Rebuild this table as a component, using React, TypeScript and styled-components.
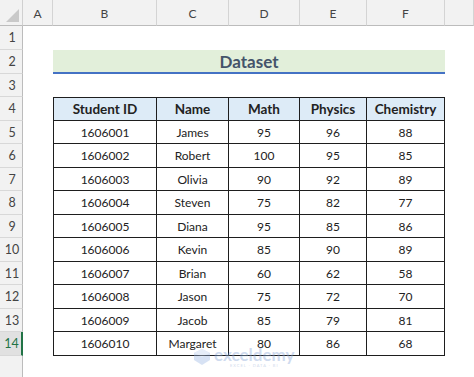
import { Fragment } from "react";
import styled, { createGlobalStyle } from "styled-components";

const GlobalStyle = createGlobalStyle`
  html, body {
    margin: 0;
    padding: 0;
    background: #ffffff;
    overflow: hidden;
  }
  body {
    font-family: "Lato", "Open Sans", sans-serif;
  }
`;

const COLS = ["A", "B", "C", "D", "E", "F", ""];
const ROW_HEIGHTS = [24, 24, 23, 24, 23, 24, 23, 24, 23, 24, 23, 24, 23, 24];

const students = [
  ["1606001", "James", 95, 96, 88],
  ["1606002", "Robert", 100, 95, 85],
  ["1606003", "Olivia", 90, 92, 89],
  ["1606004", "Steven", 75, 82, 77],
  ["1606005", "Diana", 95, 85, 86],
  ["1606006", "Kevin", 85, 90, 89],
  ["1606007", "Brian", 60, 62, 58],
  ["1606008", "Jason", 75, 72, 70],
  ["1606009", "Jacob", 85, 79, 81],
  ["1606010", "Margaret", 80, 86, 68],
];

const heads = ["Student ID", "Name", "Math", "Physics", "Chemistry"];

const Sheet = styled.div`
  position: relative;
  width: 474px;
  height: 377px;
  overflow: hidden;
  display: grid;
  grid-template-columns: 23px 30px 104px 72px 71px 67px 78px 1fr;
  grid-template-rows: 26px ${ROW_HEIGHTS.map((h) => `${h}px`).join(" ")} 1fr;
  color: #222;
`;

const Corner = styled.div`
  background: #f2f2f2;
  border-right: 1px solid #d0d0d0;
  border-bottom: 1px solid #bcbcbc;
  position: relative;
  &::after {
    content: "";
    position: absolute;
    right: 3px;
    bottom: 3px;
    width: 0;
    height: 0;
    border-left: 13px solid transparent;
    border-bottom: 13px solid #c9c9c9;
  }
`;

const ColHead = styled.div`
  background: #f2f2f2;
  border-right: 1px solid #d4d4d4;
  border-bottom: 1px solid #bcbcbc;
  display: flex;
  align-items: center;
  justify-content: center;
  font-size: 12px;
  color: #444;
  padding-top: 2px;
`;

const RowHead = styled.div<{ $active?: boolean }>`
  background: ${(p) => (p.$active ? "#e1e1e1" : "#f2f2f2")};
  border-bottom: 1px solid #d8d8d8;
  border-right: ${(p) => (p.$active ? "2px solid #217346" : "1px solid #bcbcbc")};
  display: flex;
  align-items: center;
  justify-content: center;
  font-size: 12.5px;
  color: ${(p) => (p.$active ? "#217346" : "#444")};
  padding-left: 2px;
`;

const RowHeadFill = styled.div`
  background: #f2f2f2;
  border-right: 1px solid #bcbcbc;
`;

const Blank = styled.div<{ $span?: string }>`
  ${(p) => p.$span && `grid-column: ${p.$span};`}
`;

const TitleBar = styled.div`
  grid-column: 3 / 8;
  background: #e2efda;
  border-bottom: 2px solid #4472c4;
  display: flex;
  align-items: center;
  justify-content: center;
  font-weight: 700;
  font-size: 17px;
  color: #44546a;
  padding-top: 1px;
`;

const Cell = styled.div<{ $head?: boolean; $first?: boolean }>`
  display: flex;
  align-items: center;
  justify-content: center;
  font-size: 12px;
  border-right: 1px solid #1e1e1e;
  border-bottom: 1px solid #1e1e1e;
  ${(p) => p.$first && "border-left: 1px solid #1e1e1e;"}
  ${(p) =>
    p.$head &&
    `
    border-top: 1px solid #1e1e1e;
    background: #ddebf7;
    font-weight: 700;
    font-size: 13.5px;
  `}
`;

const Watermark = styled.div`
  position: absolute;
  left: 193px;
  top: 346px;
  display: flex;
  align-items: center;
  gap: 3px;
  opacity: 0.4;
  pointer-events: none;
`;

const MarkText = styled.div`
  display: flex;
  flex-direction: column;
  align-items: center;
  line-height: 1;
`;

const MarkName = styled.span`
  font-size: 17px;
  font-weight: 700;
  color: #8aa7d8;
`;

const MarkSub = styled.span`
  font-size: 4px;
  letter-spacing: 1px;
  color: #8aa4cf;
  margin-top: 1px;
`;

export default function App() {
  return (
    <>
      <GlobalStyle />
      <Sheet>
        <Corner />
        {COLS.map((c, i) => (
          <ColHead key={i}>{c}</ColHead>
        ))}

        <RowHead>1</RowHead>
        <Blank $span="2 / 9" />

        <RowHead>2</RowHead>
        <Blank />
        <TitleBar>Dataset</TitleBar>
        <Blank />

        <RowHead>3</RowHead>
        <Blank $span="2 / 9" />

        <RowHead>4</RowHead>
        <Blank />
        {heads.map((h, i) => (
          <Cell key={h} $head $first={i === 0}>
            {h}
          </Cell>
        ))}
        <Blank />

        {students.map((s, r) => (
          <Fragment key={r}>
            <RowHead $active={r === 9}>{r + 5}</RowHead>
            <Blank />
            {s.map((v, i) => (
              <Cell key={i} $first={i === 0}>
                {v}
              </Cell>
            ))}
            <Blank />
          </Fragment>
        ))}

        <RowHeadFill />

        <Watermark>
          <svg width="18" height="18" viewBox="0 0 18 18">
            <path d="M9 1 L17 5 L17 12 L9 17 L1 12 L1 5 Z" fill="#9db8e4" />
            <path d="M9 1 L17 5 L9 9 L1 5 Z" fill="#c3d4f0" />
          </svg>
          <MarkText>
            <MarkName>exceldemy</MarkName>
            <MarkSub>EXCEL · DATA · BI</MarkSub>
          </MarkText>
        </Watermark>
      </Sheet>
    </>
  );
}
